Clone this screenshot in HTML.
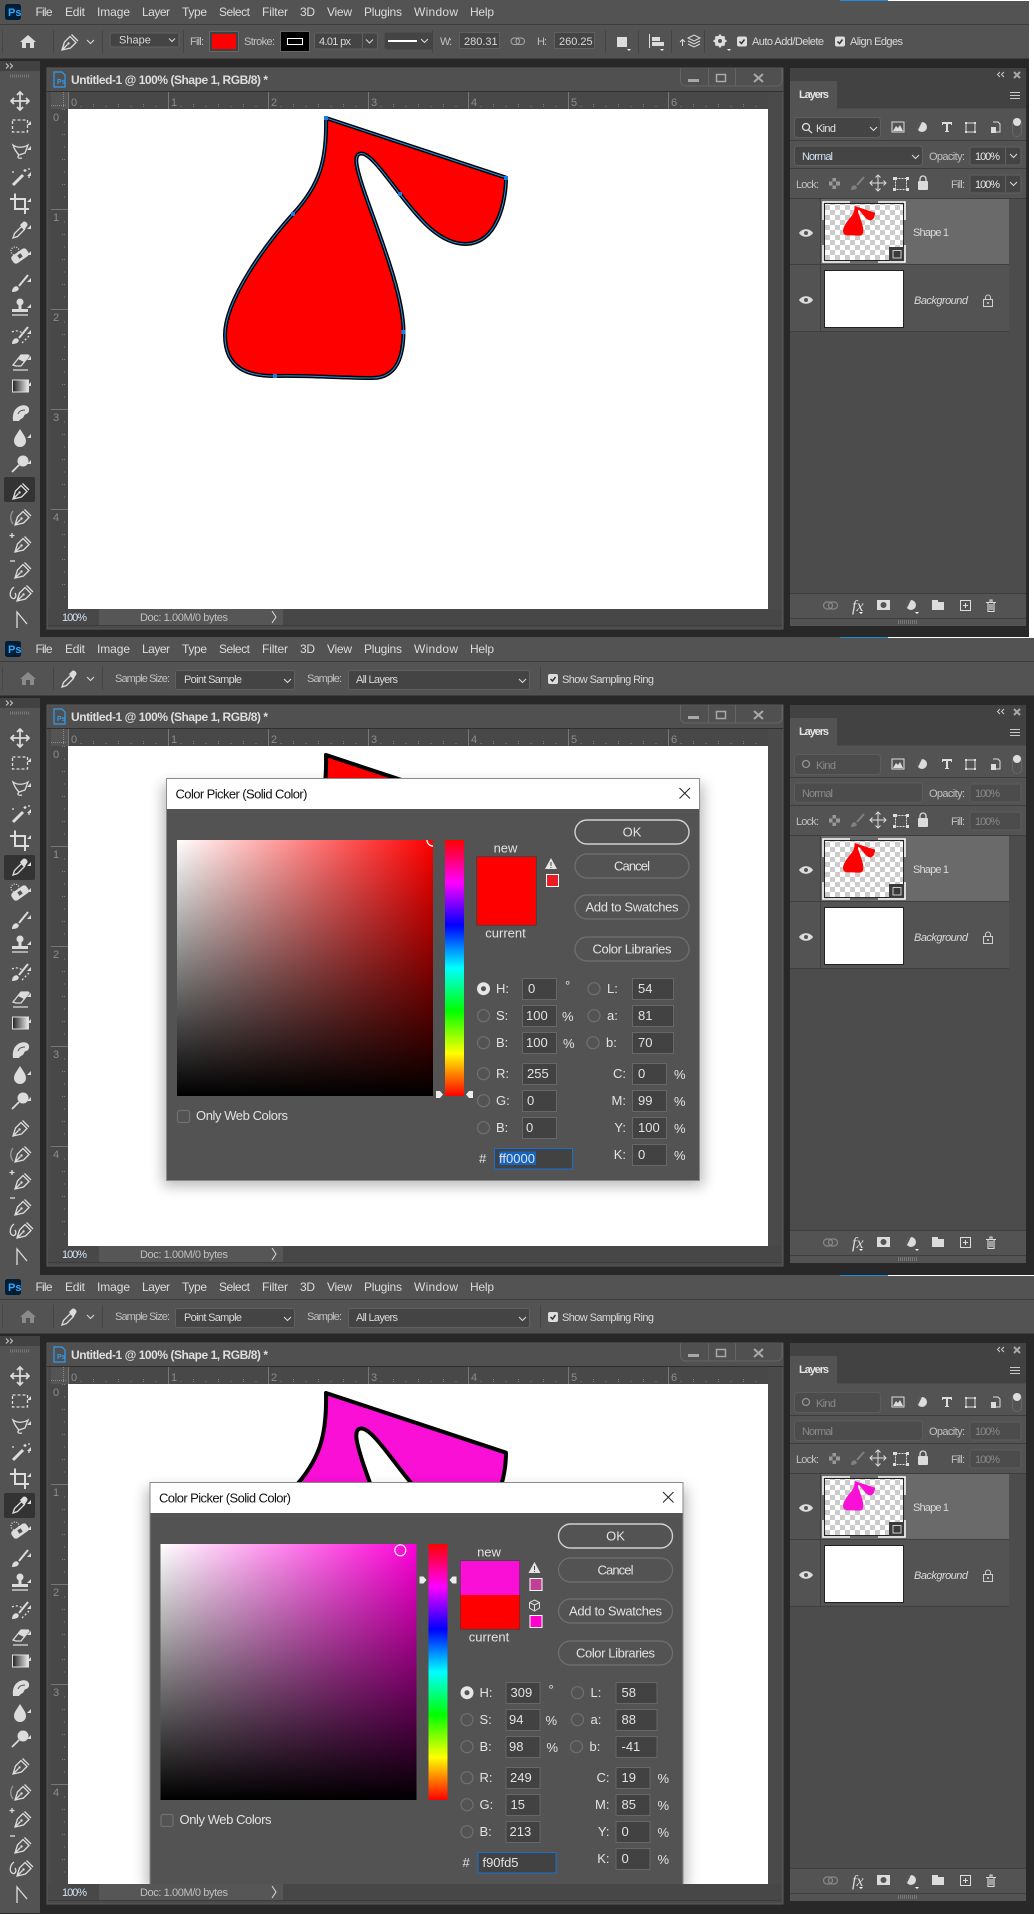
<!DOCTYPE html>
<html lang="en"><head><meta charset="utf-8"><title>Color Picker</title>
<style>
html,body{margin:0;padding:0;background:#fff;width:1034px;height:1914px;overflow:hidden}
svg{display:block}
text{font-family:"Liberation Sans",sans-serif;font-size:12px;fill:#dcdcdc}
.o{font-size:11px;fill:#d8d8d8}
.lb{font-size:11px;fill:#c0c0c0}
.r{font-size:11px;fill:#8c8c8c}
.ti{font-size:12px;font-weight:bold;fill:#dedede}
.d{font-size:13px;fill:#e2e2e2}
.dm{font-size:11px;fill:#8a8a8a}
.i{fill:none}
.i:not([stroke]){stroke:#dcdcdc}
.i:not([stroke-width]){stroke-width:1.3}
.f{fill:#dcdcdc;stroke:none}
</style></head><body>
<svg width="1034" height="1914" viewBox="0 0 1034 1914" xmlns="http://www.w3.org/2000/svg">
<defs>
<linearGradient id="gw"><stop offset="0" stop-color="#fff"/><stop offset="1" stop-color="#fff" stop-opacity="0"/></linearGradient>
<linearGradient id="gb" x2="0" y2="1"><stop offset="0" stop-color="#000" stop-opacity="0"/><stop offset="1" stop-color="#000"/></linearGradient>
<linearGradient id="gh" x2="0" y2="1"><stop offset="0" stop-color="#f00"/><stop offset=".167" stop-color="#f0f"/><stop offset=".333" stop-color="#00f"/><stop offset=".5" stop-color="#0ff"/><stop offset=".667" stop-color="#0f0"/><stop offset=".833" stop-color="#ff0"/><stop offset="1" stop-color="#f00"/></linearGradient>
<linearGradient id="gg"><stop offset="0" stop-color="#222"/><stop offset="1" stop-color="#eee"/></linearGradient>
<filter id="sh" x="-10%" y="-10%" width="120%" height="120%"><feGaussianBlur stdDeviation="7"/></filter>
<pattern id="ck" width="10" height="10" patternUnits="userSpaceOnUse"><rect width="10" height="10" fill="#fff"/><rect width="5" height="5" fill="#ccc"/><rect x="5" y="5" width="5" height="5" fill="#ccc"/></pattern>
<clipPath id="d3"><rect x="-30" y="-30" width="600" height="432"/></clipPath>
<path id="shape" d="M326 118L506 177.7C506 200 498 243 466 244C440 244 420 220 400 194C385 175 370 153 361 153.5C352 154 358 172 362 185C375 225 403 290 403.5 331C403.5 360 395 378 372 378C340 378 305 375 275 376C250 376 225 370 225 335C225 300 265 245 293 214C320 185 327 160 326 118Z"/>

<g id="pen"><path class="i" d="M-8 8L-5.500 0L0-5.500L6 .5L.5 6ZM-8 8L-2.500 2.500M1.500-7.500L8-1"/><circle class="f" cx="-1.500" cy="1.500" r="1.200"/></g>
<g id="drop"><path class="i" d="M-7 8L-5.500 3.500L1.500-3.500L4.500-.5L-2.500 6.500Z"/><path class="f" d="M0-5L3-8C5-10 9-6 7-4L4.500 0L3-1Z"/></g>

<g id="tools">
<path class="i" stroke-width="1.700" d="M20 92V110M11 101H29M17 95L20 92 23 95M17 107L20 110 23 107M14 98L11 101 14 104M26 98L29 101 26 104"/>
<rect x="12.500" y="120" width="15" height="12" class="i" stroke-dasharray="3 2"/>
<path class="i" d="M13 145C17 148 23 148 28 145L25 153 19 155C16 152 14 148 13 145ZM19 155C17 157 18 159 22 158"/>
<path class="i" stroke-width="3" d="M13 185L23 175"/><path class="i" d="M25 169V172M23.500 170.500H26.500M29 175V178M13 171V173M28 169H30"/>
<path class="i" stroke-width="2" d="M15 193.500V209H29M10 199H25V214"/>
<use href="#drop" x="20" y="230"/>
<g transform="translate(20 256) rotate(-35)"><rect x="-9" y="-4.500" width="18" height="9" rx="3" class="f"/><rect x="-2" y="-2" width="4" height="4" fill="#555"/></g><circle cx="15" cy="251" r="4" class="i" stroke-dasharray="1 1.500"/>
<path class="f" d="M12 292C12 287 16 285 18 287C20 289 18 292 12 292Z"/><path class="i" stroke-width="2" d="M19 286L28 275"/>
<circle cx="20" cy="302" r="3.500" class="f"/><rect x="18.500" y="304" width="3" height="5" class="f"/><rect x="12" y="309" width="16" height="3" class="f"/><path class="i" d="M12 315H28"/>
<path class="f" d="M12 344C12 339 16 337 18 339C20 341 18 344 12 344Z"/><path class="i" stroke-width="2" d="M19 338L28 327"/><path class="i" stroke-dasharray="2 2" d="M12 332C16 330 20 331 22 333M22 343L29 336"/>
<path class="i" d="M13 365L21 355H28L29 356L21 366H16ZM13 370H28"/><path class="f" d="M21 355H28L29 356L24 362L18 359Z"/>
<rect x="12.500" y="380" width="16" height="12" fill="url(#gg)" stroke="#ddd"/>
<path class="f" d="M13 421C12 413 15 408 20 406C25 404 30 406 29 411C28 415 25 413 24 416C23 419 21 418 19 421Z"/><path stroke="#535353" fill="none" d="M18 414C19 411 22 410 25 410"/>
<path class="f" d="M20 429C23 434 26 437 26 441A6 6 0 0 1 14 441C14 437 17 434 20 429Z"/>
<circle cx="23" cy="461" r="5.500" class="f"/><path class="i" stroke-width="1.800" d="M19 465L12 472"/>
<path fill="#dcdcdc" d="M31 121L31 125 27 125ZM31 146L31 150 27 150ZM31 172L31 176 27 176ZM31 198L31 202 27 202ZM31 225L31 229 27 229ZM31 251L31 255 27 255ZM31 278L31 282 27 282ZM31 304L31 308 27 308ZM31 330L31 334 27 334ZM31 356L31 360 27 360ZM31 382L31 386 27 386ZM31 434L31 438 27 438ZM31 460L31 464 27 464Z"/>
<use href="#pen" x="21" y="491"/>
<use href="#pen" x="23" y="517"/><path class="i" stroke="#999" d="M13 511C10 515 10 520 13 524"/>
<use href="#pen" x="23" y="544"/><path class="i" d="M12 533V538M9.500 535.500H14.500"/>
<use href="#pen" x="23" y="570"/><path class="i" d="M10 561H15"/>
<use href="#pen" x="25" y="593"/><path class="i" d="M14 587C10 590 9 596 12 598C15 600 17 596 15 593"/>
<path class="i" d="M17 628V612L27 624"/>
</g>

<g id="chrome">
<rect width="1034" height="638" fill="#282828"/>
<rect width="1034" height="24" fill="#535353"/><rect y="24" width="1034" height="1" fill="#3c3c3c"/>
<rect y="25" width="1034" height="33" fill="#535353"/><rect y="58" width="1034" height="1" fill="#3e3e3e"/>
<rect x="840" width="48" height="1" fill="#1d8fd8"/><rect x="888" width="146" height="1" fill="#fff"/>
<rect x="5" y="4" width="16" height="16" rx="2.500" fill="#001e36"/>
<path stroke="#3a3a3a" d="M2.500 30V53" stroke-dasharray="1 1"/>
<path stroke="#444" d="M53.500 30V53M102.500 30V53"/>
<rect y="61" width="40" height="10" fill="#424242"/>
<path class="i" stroke="#ccc" stroke-width="1" d="M6 63.500L8.500 66 6 68.500M10 63.500L12.500 66 10 68.500"/>
<rect y="71" x="0" width="40" height="567" fill="#535353"/>
<path stroke="#777" stroke-dasharray="1 1" stroke-width="3" d="M10 76H29"/>

<rect x="47" y="68" width="736" height="561" fill="#4a4a4a" stroke="#5b5b5b"/>
<rect x="48" y="69" width="734" height="23" fill="#505050"/>
<path fill="none" stroke="#646464" d="M680.500 68.500V81a5 5 0 0 0 5 5H777a5 5 0 0 0 5-5V68.500M708.500 68V86M735.500 68V86"/>
<rect x="688" y="79" width="11" height="3" fill="#a8a8a8"/>
<rect x="716.500" y="74.500" width="9" height="7" fill="none" stroke="#a8a8a8" stroke-width="1.500"/>
<path d="M754 74L763 82M763 74L754 82" stroke="#a8a8a8" stroke-width="2"/>
<path d="M54 72H62L65 75V87H54Z" fill="none" stroke="#2f9cf0" stroke-width="1.200"/>
<rect x="51" y="92" width="717" height="17" fill="#484848"/><rect x="51" y="109" width="17" height="500" fill="#484848"/>
<rect x="51" y="92" width="17" height="17" fill="#545454"/>
<path stroke="#888" stroke-dasharray="1 1" d="M51 105.500H67M63.500 92V108"/>
<path stroke="#303030" d="M47 91.500H783"/>
<path stroke="#808080" stroke-dasharray="1 11.500" d="M68 106.500H768M64.500 109V609" stroke-width="1"/>
<path stroke="#808080" stroke-dasharray="1 24" d="M68 104.500H768M62.500 109V609"/>
<path stroke="#777" d="M68.500 92V109M168.500 92V109M268.500 92V109M368.500 92V109M468.500 92V109M568.500 92V109M668.500 92V109M51 209.500H68M51 309.500H68M51 409.500H68M51 509.500H68"/>
<rect x="68" y="109" width="700" height="500" fill="#fff"/>
<rect x="48" y="609" width="734" height="16" fill="#474747"/>
<rect x="48" y="609" width="51" height="16" fill="#484848"/><rect x="99" y="609" width="184" height="16" fill="#565656"/>
<path class="i" stroke-width="1" d="M272 611L276 617 272 623"/>
<path stroke="#3d3d3d" d="M48 625.500H782"/>

<rect x="790" y="68" width="236" height="558" fill="#4c4c4c"/>
<rect x="790" y="68" width="236" height="40" fill="#424242"/>
<rect x="790" y="81" width="47" height="28" fill="#535353"/>
<rect x="790" y="109" width="236" height="90" fill="#535353"/>
<path class="i" stroke="#ccc" stroke-width="1" d="M1000 72L997.500 74.500 1000 77M1004 72L1001.500 74.500 1004 77"/>
<path d="M1014 72L1020 78M1020 72L1014 78" stroke="#aaa" stroke-width="2"/>
<path stroke="#c8c8c8" d="M1010 92.500H1020M1010 95.500H1020M1010 98.500H1020"/>
<path stroke="#3e3e3e" d="M790 140.500H1026M790 168.500H1026M790 198.500H1026"/>
<rect x="820" y="199" width="189" height="65" fill="#6a6a6a"/>
<rect x="790" y="199" width="30" height="65" fill="#535353"/>
<rect x="790" y="265" width="219" height="66" fill="#535353"/>
<path stroke="#3f3f3f" d="M790 264.500H1009M820.500 199V331M790 331.500H1009"/>
<path class="f" d="M799 233C802 228 810 228 813 233C810 238 802 238 799 233Z"/><circle cx="806" cy="233" r="2" fill="#555"/>
<path class="f" d="M799 300C802 295 810 295 813 300C810 305 802 305 799 300Z"/><circle cx="806" cy="300" r="2" fill="#555"/>
<rect x="824.500" y="203.500" width="79" height="57" fill="url(#ck)" stroke="#222"/>
<path fill="none" stroke="#fff" stroke-width="1.500" d="M823 220V202H850M878 202H905V220M905 245V262H878M850 262H823V245"/>
<rect x="889" y="247" width="15" height="14" fill="#3a3a3a"/>
<rect x="893" y="250.500" width="8" height="7.500" fill="none" stroke="#ccc"/>
<rect x="824.500" y="270.500" width="79" height="57" fill="#fff" stroke="#222"/>
<path fill="none" stroke="#d0d0d0" d="M983.500 299.500H992.500V306.500H983.500ZM985.500 299.500V297.500A2.500 2.500 0 0 1 990.500 297.500V299.500"/><circle cx="988" cy="303" r="1" fill="#d0d0d0"/>
<rect x="790" y="593" width="236" height="25" fill="#535353"/>
<path stroke="#3e3e3e" d="M790 593.500H1026M790 618.500H1026"/>
<rect x="790" y="619" width="236" height="7" fill="#535353"/>
<path stroke="#777" stroke-dasharray="1 1" stroke-width="4" d="M898 622H918"/>
<rect x="823.500" y="602" width="9" height="7" rx="3.500" fill="none" stroke="#888" stroke-width="1.200"/><rect x="828.500" y="602" width="9" height="7" rx="3.500" fill="none" stroke="#888" stroke-width="1.200"/>
<rect x="877" y="600" width="13" height="10" class="f"/><circle cx="883.500" cy="605" r="3" fill="#555"/>
<circle cx="911" cy="605" r="5" class="f"/><path fill="#555" d="M911 600a5 5 0 0 0-4 8Z"/>
<path fill="#fff" d="M859 612h4l-2 2zM915 612h4l-2 2z"/>
<path class="f" d="M932 600H938V602H944V610H932Z"/>
<rect x="960.500" y="600.500" width="10" height="10" class="i" stroke-width="1"/><path class="i" stroke-width="1" d="M965.500 603V608M963 605.500H968"/>
<path class="i" stroke-width="1.100" d="M986 602.500H996M988 602V611.500H994V602M990 602V600H992V602M990 604V610M992 604V610"/>
</g>

<g id="layericons">
<rect x="892" y="122" width="12" height="10" class="i" stroke-width="1"/><path class="f" d="M893 131L896 126 898 128 900 125 903 131Z"/>
<circle cx="922" cy="127" r="5" class="f"/><path fill="#555" d="M922 122a5 5 0 0 0-4 8Z"/>
<path class="f" d="M942 122H952V125H951V124H948V131H949V132H945V131H946V124H943V125H942Z"/>
<rect x="966" y="123" width="9" height="9" class="i" stroke-width="1"/><path fill="#dcdcdc" d="M965 122h2v2h-2zM974 122h2v2h-2zM965 131h2v2h-2zM974 131h2v2h-2z"/>
<path class="i" stroke-width="1" d="M993 122H998L1000 124V132H995"/><rect x="991" y="127" width="5" height="6" class="f"/>
<rect x="1012.500" y="118.500" width="9" height="18" rx="4.500" fill="none" stroke="#666"/><circle cx="1017" cy="122" r="4" fill="#ddd"/>
</g>

<g id="locks">
<rect x="829" y="178" width="11" height="11" fill="#999"/><path fill="#555" d="M829 178h3.500v3.500h-3.500zM836 178h4v3.500h-4zM832.500 181.500h3.500v4h-3.500zM829 185.500h3.500v3.500h-3.500zM836 185.500h4v3.500h-4z"/>
<path fill="#808080" d="M851 190C851 186 854 184 856 186C858 188 856 190 851 190Z"/><path stroke="#808080" stroke-width="2" d="M857 185L864 177"/>
<path class="i" stroke-width="1" d="M878 175V191M870 183H886M875.500 177.500L878 175 880.500 177.500M875.500 188.500L878 191 880.500 188.500M872.500 180.500L870 183 872.500 185.500M883.500 180.500L886 183 883.500 185.500"/>
<path class="i" stroke-dasharray="2 1" stroke-width="1" d="M895.500 178.500H906.500V189.500H895.500Z"/><path fill="#ddd" d="M893 177h4v3h-4zM906 177h3v3h-3zM893 188h3v3h-3zM906 188h3v3h-3z"/>
<rect x="918" y="181" width="10" height="9" rx="1" class="f"/><path class="i" d="M920 181V179A3 3 0 0 1 926 179V181"/>
</g>

<g id="dlgbase">
<rect x="-3" y="6" width="540" height="402" fill="#000" opacity=".28" filter="url(#sh)"/>
<rect x=".5" y=".5" width="533" height="402" fill="#535353" stroke="#8b8b8b"/>
<rect x="1" y="1" width="532" height="30" fill="#fff"/>
<path d="M513.500 10L524 20.500M524 10L513.500 20.500" stroke="#222" stroke-width="1"/>
<rect x="279" y="62" width="19" height="256" fill="url(#gh)"/>
<rect x="310.500" y="78.500" width="60" height="69" fill="#333"/>
<path fill="#e4e4e4" d="M385 80L391 91H379Z"/><path d="M385 84V88M385 89V90" stroke="#444"/>
<g fill="none" stroke="#707070" stroke-width="1.200">
<rect x="409" y="76" width="114" height="24" rx="12"/><rect x="409" y="117" width="114" height="24" rx="12"/><rect x="409" y="159" width="114" height="24" rx="12"/>
<circle cx="317.500" cy="237.700" r="6"/><circle cx="317.500" cy="264.700" r="6"/><circle cx="317.500" cy="295.700" r="6"/><circle cx="317.500" cy="322.700" r="6"/><circle cx="317.500" cy="349.700" r="6"/>
<circle cx="428" cy="210.700" r="6"/><circle cx="428" cy="237.700" r="6"/><circle cx="427" cy="264.700" r="6"/>
<rect x="11.500" y="332.500" width="12" height="12" rx="2"/>
</g>
<rect x="409" y="42" width="114" height="24" rx="12" fill="none" stroke="#cfcfcf" stroke-width="1.400"/>
<circle cx="317.500" cy="210.700" r="6.500" fill="#e6e6e6"/><circle cx="317.500" cy="210.700" r="2.500" fill="#535353"/>
<g fill="#424242" stroke="#676767">
<rect x="356.500" y="200.500" width="34" height="21"/><rect x="356.500" y="227.500" width="34" height="21"/><rect x="356.500" y="254.500" width="34" height="21"/>
<rect x="356.500" y="285.500" width="34" height="21"/><rect x="356.500" y="312.500" width="34" height="21"/><rect x="356.500" y="339.500" width="34" height="21"/>
<rect x="466.500" y="200.500" width="41" height="21"/><rect x="466.500" y="227.500" width="41" height="21"/><rect x="466.500" y="254.500" width="41" height="21"/>
<rect x="466.500" y="285.500" width="34" height="21"/><rect x="466.500" y="312.500" width="34" height="21"/><rect x="466.500" y="339.500" width="34" height="21"/><rect x="466.500" y="366.500" width="34" height="21"/>
</g>
<rect x="328.500" y="370.500" width="78" height="20.500" fill="#424242" stroke="#1a6fd0"/>
</g>
</defs>

<rect y="1900" width="1034" height="14" fill="#282828"/>

<!-- PANEL 1 -->
<g>
<use href="#chrome"/>
<rect x="1029" width="5" height="638" fill="#fff"/>
<rect x="4" y="477" width="31" height="25" rx="2" fill="#333"/>
<use href="#tools"/>
<text x="8" y="16" style="font-size:11px;font-weight:bold;fill:#31a8ff">Ps</text>
<text x="35.500" y="16" textLength="17">File</text><text x="65" y="16" textLength="20">Edit</text><text x="97" y="16" textLength="33">Image</text><text x="142" y="16" textLength="28">Layer</text><text x="182" y="16" textLength="25">Type</text><text x="219" y="16" textLength="31">Select</text><text x="262" y="16" textLength="26">Filter</text><text x="300" y="16" textLength="15">3D</text><text x="327" y="16" textLength="25">View</text><text x="364" y="16" textLength="38">Plugins</text><text x="414" y="16" textLength="44">Window</text><text x="470" y="16" textLength="24">Help</text>

<path class="f" d="M28 35L20 42H22V48H26V43H30V48H34V42H36Z"/>
<use href="#pen" x="70" y="42"/><path class="i" stroke-width="1" d="M87 40L90.500 43.500 94 40"/>
<rect x="110" y="33" width="69" height="14" rx="2" fill="#444" stroke="#606060"/>
<text class="o" x="119" y="43.500">Shape</text><path class="i" stroke-width="1" d="M169 38.500L172 41.500 175 38.500"/>
<path stroke="#444" d="M183.500 30V53M605.500 30V53M638.500 30V53M671.500 30V53M704.500 30V53M432.500 30V53" />
<text class="lb" x="190" y="45" textLength="14">Fill:</text>
<rect x="209.500" y="31.500" width="29" height="20" fill="#404040" stroke="#666"/><rect x="212" y="34" width="24" height="15" fill="#f00"/>
<text class="lb" x="244" y="45" textLength="31">Stroke:</text>
<rect x="280.500" y="31.500" width="29" height="20" fill="#000" stroke="#666"/><rect x="287.500" y="38.500" width="15" height="6" fill="none" stroke="#fff"/>
<rect x="314.500" y="33" width="63" height="16" rx="2" fill="#444" stroke="#606060"/><path stroke="#606060" d="M362.500 33V49"/>
<text class="o" x="319" y="45" textLength="32">4.01 px</text><path class="i" stroke-width="1" d="M366 39.500L369.500 43 373 39.500"/>
<rect x="384.500" y="32.500" width="48" height="17" rx="2" fill="#444"/><rect x="388" y="40" width="29" height="2" fill="#fff"/><path class="i" stroke-width="1" d="M421 39L424.500 42.500 428 39"/>
<text class="lb" x="440" y="45" textLength="12">W:</text>
<rect x="459.500" y="32.500" width="40" height="16" fill="#444" stroke="#606060"/><svg x="460" y="33" width="39" height="16"><text class="o" x="4" y="12">280.31 px</text></svg>
<rect x="511" y="38" width="8.500" height="6.500" rx="3.200" fill="none" stroke="#aaa"/><rect x="516" y="38" width="8.500" height="6.500" rx="3.200" fill="none" stroke="#aaa"/>
<text class="lb" x="537" y="45" textLength="10">H:</text>
<rect x="554.500" y="32.500" width="40" height="16" fill="#444" stroke="#606060"/><svg x="555" y="33" width="39" height="16"><text class="o" x="4" y="12">260.25 px</text></svg>
<rect x="617" y="37" width="10" height="10" fill="#ddd"/><path fill="#fff" d="M627 49h4l-2 2z"/>
<path class="f" d="M649 34h1v14h-1zM652 37h8v4h-8zM652 42h12v4h-12z"/><path fill="#fff" d="M660 49h4l-2 2z"/>
<path class="i" stroke-width="1" d="M688 38L694 35 700 38 694 41ZM688 41L694 44 700 41M688 44L694 47 700 44M680 42L682.500 39.500 685 42M682.500 39.500V46"/>
<circle cx="720" cy="41" r="4" fill="none" stroke="#ddd" stroke-width="3"/><path stroke="#ddd" stroke-width="2" d="M720 34.500V47.500M713.500 41H726.500M715.500 36.500L724.500 45.500M724.500 36.500L715.500 45.500"/><circle cx="720" cy="41" r="2" fill="#535353"/><path fill="#fff" d="M727 49h4l-2 2z"/>
<rect x="737" y="36.500" width="10" height="10" rx="2" fill="#ddd"/><path fill="none" stroke="#333" stroke-width="1.500" d="M739.500 41.500L741.500 43.500 744.500 39.500"/>
<text class="o" x="752" y="45" textLength="72">Auto Add/Delete</text>
<rect x="835" y="36.500" width="10" height="10" rx="2" fill="#ddd"/><path fill="none" stroke="#333" stroke-width="1.500" d="M837.500 41.500L839.500 43.500 842.500 39.500"/>
<text class="o" x="850" y="45" textLength="53">Align Edges</text>

<text class="ti" x="71" y="84" textLength="197">Untitled-1 @ 100% (Shape 1, RGB/8) *</text>
<text x="57" y="84" style="font-size:7px;font-weight:bold;fill:#2f9cf0">Ps</text>
<text class="r" x="71" y="106">0</text><text class="r" x="171" y="106">1</text><text class="r" x="271" y="106">2</text><text class="r" x="371" y="106">3</text><text class="r" x="471" y="106">4</text><text class="r" x="571" y="106">5</text><text class="r" x="671" y="106">6</text>
<text class="r" x="53" y="121">0</text><text class="r" x="53" y="221">1</text><text class="r" x="53" y="321">2</text><text class="r" x="53" y="421">3</text><text class="r" x="53" y="521">4</text>
<text class="o" x="62" y="621" textLength="25" style="fill:#cfe3f5">100%</text><text class="o" x="140" y="621" textLength="88" style="fill:#bfbfbf">Doc: 1.00M/0 bytes</text>

<use href="#shape" fill="#f00" stroke="#000" stroke-width="4" stroke-linejoin="round"/>
<use href="#shape" fill="none" stroke="#2a86d8" stroke-width="1.100"/>
<path fill="#1a7fe0" d="M324 116h4v4h-4zM504 176h4v4h-4zM398 192h4v4h-4zM291 212h4v4h-4zM401.500 330h4v4h-4zM273 374h4v4h-4z"/>

<text x="799" y="98" style="font-weight:bold;font-size:11px;fill:#e4e4e4" textLength="30">Layers</text>
<rect x="794.500" y="117.500" width="86" height="20" rx="3" fill="#444" stroke="#606060"/>
<circle cx="806" cy="127" r="3.500" class="i"/><path class="i" d="M808.500 130L812 133"/><text class="o" x="816" y="132" style="fill:#e0e0e0" textLength="20">Kind</text><path class="i" stroke-width="1" d="M870 127L873.500 130.500 877 127"/>
<use href="#layericons"/>
<rect x="794.500" y="146" width="128" height="19.500" rx="3" fill="#444" stroke="#606060"/><text class="o" x="802" y="160" style="fill:#cfe3f5" textLength="31">Normal</text><path class="i" stroke-width="1" d="M912 155L915.500 158.500 919 155"/>
<text class="lb" x="929" y="160" textLength="36">Opacity:</text>
<rect x="970" y="147" width="51" height="18" rx="2" fill="#444" stroke="#606060"/><path stroke="#606060" d="M1005.500 147V165"/><text class="o" x="975" y="160" textLength="25" style="fill:#e6e6e6">100%</text><path class="i" stroke-width="1" d="M1010 154L1013.500 157.500 1017 154"/>
<text class="lb" x="796" y="188" textLength="23">Lock:</text>
<use href="#locks"/>
<text class="lb" x="951" y="188" textLength="14">Fill:</text>
<rect x="970" y="175" width="51" height="18" rx="2" fill="#444" stroke="#606060"/><path stroke="#606060" d="M1005.500 175V193"/><text class="o" x="975" y="188" textLength="25" style="fill:#e6e6e6">100%</text><path class="i" stroke-width="1" d="M1010 182L1013.500 185.500 1017 182"/>
<g transform="translate(843 206) scale(.114) translate(-225 -118)"><use href="#shape" fill="#f00"/></g>
<text class="o" x="913" y="236" textLength="36">Shape 1</text>
<text class="o" x="914" y="304" textLength="54" style="font-style:italic">Background</text>
<text x="852" y="611" style="font-style:italic;font-family:'Liberation Serif',serif;font-size:16px">fx</text>
</g>

<!-- PANEL 2 -->
<g transform="translate(0 637)">
<use href="#chrome"/>
<rect x="4" y="218" width="31" height="25" rx="2" fill="#333"/>
<use href="#tools"/>
<text x="8" y="16" style="font-size:11px;font-weight:bold;fill:#31a8ff">Ps</text>
<text x="35.500" y="16" textLength="17">File</text><text x="65" y="16" textLength="20">Edit</text><text x="97" y="16" textLength="33">Image</text><text x="142" y="16" textLength="28">Layer</text><text x="182" y="16" textLength="25">Type</text><text x="219" y="16" textLength="31">Select</text><text x="262" y="16" textLength="26">Filter</text><text x="300" y="16" textLength="15">3D</text><text x="327" y="16" textLength="25">View</text><text x="364" y="16" textLength="38">Plugins</text><text x="414" y="16" textLength="44">Window</text><text x="470" y="16" textLength="24">Help</text>

<path fill="#8a8a8a" d="M28 35L20 42H22V48H26V43H30V48H34V42H36Z"/>
<use href="#drop" x="69" y="42"/><path class="i" stroke-width="1" d="M87 40L90.500 43.500 94 40"/>
<text class="lb" x="115" y="45" textLength="55">Sample Size:</text>
<rect x="175.500" y="33.500" width="119" height="19" rx="2" fill="#444" stroke="#606060"/><text class="o" x="184" y="46" textLength="58">Point Sample</text><path class="i" stroke-width="1" d="M284 42L287.500 45.500 291 42"/>
<text class="lb" x="307" y="45" textLength="35">Sample:</text>
<rect x="348.500" y="33.500" width="181" height="19" rx="2" fill="#444" stroke="#606060"/><text class="o" x="356" y="46" textLength="42">All Layers</text><path class="i" stroke-width="1" d="M519 42L522.500 45.500 526 42"/>
<path stroke="#444" d="M540.500 30V53"/>
<rect x="548" y="37" width="10" height="10" rx="2" fill="#ddd"/><path fill="none" stroke="#333" stroke-width="1.500" d="M550.500 42L552.500 44 555.500 40"/>
<text class="o" x="562" y="46" textLength="92">Show Sampling Ring</text>

<text class="ti" x="71" y="84" textLength="197">Untitled-1 @ 100% (Shape 1, RGB/8) *</text>
<text x="57" y="84" style="font-size:7px;font-weight:bold;fill:#2f9cf0">Ps</text>
<text class="r" x="71" y="106">0</text><text class="r" x="171" y="106">1</text><text class="r" x="271" y="106">2</text><text class="r" x="371" y="106">3</text><text class="r" x="471" y="106">4</text><text class="r" x="571" y="106">5</text><text class="r" x="671" y="106">6</text>
<text class="r" x="53" y="121">0</text><text class="r" x="53" y="221">1</text><text class="r" x="53" y="321">2</text><text class="r" x="53" y="421">3</text><text class="r" x="53" y="521">4</text>
<text class="o" x="62" y="621" textLength="25" style="fill:#cfe3f5">100%</text><text class="o" x="140" y="621" textLength="88" style="fill:#bfbfbf">Doc: 1.00M/0 bytes</text>

<use href="#shape" fill="#f00" stroke="#000" stroke-width="4" stroke-linejoin="round"/>

<text x="799" y="98" style="font-weight:bold;font-size:11px;fill:#e4e4e4" textLength="30">Layers</text>
<rect x="794.500" y="117.500" width="86" height="20" rx="3" fill="#4c4c4c" stroke="#5c5c5c"/>
<circle cx="806" cy="127" r="3.500" class="i" opacity=".5"/><text class="dm" x="816" y="132" textLength="20">Kind</text>
<use href="#layericons"/>
<rect x="794.500" y="146" width="128" height="19.500" rx="3" fill="#4c4c4c" stroke="#5c5c5c"/><text class="dm" x="802" y="160" textLength="31">Normal</text>
<text class="lb" x="929" y="160" textLength="36">Opacity:</text>
<rect x="970" y="147" width="51" height="18" rx="2" fill="#4c4c4c" stroke="#5c5c5c"/><text class="dm" x="975" y="160" textLength="25">100%</text>
<text class="lb" x="796" y="188" textLength="23">Lock:</text>
<use href="#locks"/>
<text class="lb" x="951" y="188" textLength="14">Fill:</text>
<rect x="970" y="175" width="51" height="18" rx="2" fill="#4c4c4c" stroke="#5c5c5c"/><text class="dm" x="975" y="188" textLength="25">100%</text>
<g transform="translate(843 206) scale(.114) translate(-225 -118)"><use href="#shape" fill="#f00"/></g>
<text class="o" x="913" y="236" textLength="36">Shape 1</text>
<text class="o" x="914" y="304" textLength="54" style="font-style:italic">Background</text>
<text x="852" y="611" style="font-style:italic;font-family:'Liberation Serif',serif;font-size:16px">fx</text>

<g transform="translate(166 141)">
<use href="#dlgbase"/>
<rect x="11" y="62" width="256" height="256" fill="#f00"/>
<rect x="11" y="62" width="256" height="256" fill="url(#gw)"/>
<rect x="11" y="62" width="256" height="256" fill="url(#gb)"/>
<path d="M261 62A6 6 0 0 0 267 68" fill="none" stroke="#fff" stroke-width="1.300"/>
<path fill="#ececec" d="M270 313H274L277 316.500 274 320H270ZM307 313V320H303L300 316.500 303 313Z"/>
<rect x="311" y="79" width="59" height="68" fill="#f00"/>
<rect x="380.500" y="96.500" width="12" height="12" fill="#ed1c24" stroke="#fff"/>
<text x="9.500" y="20.500" class="d" style="fill:#111" textLength="132">Color Picker (Solid Color)</text>
<text class="d" x="466" y="58.500" text-anchor="middle">OK</text>
<text class="d" x="466" y="92.500" text-anchor="middle" textLength="36">Cancel</text>
<text class="d" x="466" y="133.500" text-anchor="middle" textLength="93">Add to Swatches</text>
<text class="d" x="466" y="175.500" text-anchor="middle" textLength="79">Color Libraries</text>
<text class="d" x="339.500" y="74.500" text-anchor="middle">new</text><text class="d" x="339.500" y="159.500" text-anchor="middle">current</text>
<text class="d" x="30" y="342" textLength="92">Only Web Colors</text>
<text class="d" x="330" y="215">H:</text><text class="d" x="330" y="242">S:</text><text class="d" x="330" y="269">B:</text><text class="d" x="330" y="300">R:</text><text class="d" x="330" y="327">G:</text><text class="d" x="330" y="354">B:</text>
<text class="d" x="362" y="215">0</text><text class="d" x="360" y="242">100</text><text class="d" x="360" y="269">100</text><text class="d" x="361" y="300">255</text><text class="d" x="361" y="327">0</text><text class="d" x="360" y="354">0</text>
<text class="d" x="399" y="212">°</text><text class="d" x="396" y="243">%</text><text class="d" x="397" y="270">%</text>
<text class="d" x="441" y="215">L:</text><text class="d" x="441" y="242">a:</text><text class="d" x="440" y="269">b:</text>
<text class="d" x="472" y="215">54</text><text class="d" x="472" y="242">81</text><text class="d" x="472" y="269">70</text>
<text class="d" x="460" y="300" text-anchor="end">C:</text><text class="d" x="460" y="327" text-anchor="end">M:</text><text class="d" x="460" y="354" text-anchor="end">Y:</text><text class="d" x="460" y="381" text-anchor="end">K:</text>
<text class="d" x="472" y="300">0</text><text class="d" x="472" y="327">99</text><text class="d" x="472" y="354">100</text><text class="d" x="472" y="381">0</text>
<text class="d" x="508" y="301">%</text><text class="d" x="508" y="328">%</text><text class="d" x="508" y="355">%</text><text class="d" x="508" y="382">%</text>
<text class="d" x="313" y="385">#</text>
<rect x="333" y="373.500" width="37" height="13.500" fill="#1565c0"/>
<text class="d" x="333" y="385" textLength="36">ff0000</text>
</g>
</g>

<!-- PANEL 3 -->
<g transform="translate(0 1275)">
<use href="#chrome"/>
<rect x="4" y="218" width="31" height="25" rx="2" fill="#333"/>
<use href="#tools"/>
<text x="8" y="16" style="font-size:11px;font-weight:bold;fill:#31a8ff">Ps</text>
<text x="35.500" y="16" textLength="17">File</text><text x="65" y="16" textLength="20">Edit</text><text x="97" y="16" textLength="33">Image</text><text x="142" y="16" textLength="28">Layer</text><text x="182" y="16" textLength="25">Type</text><text x="219" y="16" textLength="31">Select</text><text x="262" y="16" textLength="26">Filter</text><text x="300" y="16" textLength="15">3D</text><text x="327" y="16" textLength="25">View</text><text x="364" y="16" textLength="38">Plugins</text><text x="414" y="16" textLength="44">Window</text><text x="470" y="16" textLength="24">Help</text>

<path fill="#8a8a8a" d="M28 35L20 42H22V48H26V43H30V48H34V42H36Z"/>
<use href="#drop" x="69" y="42"/><path class="i" stroke-width="1" d="M87 40L90.500 43.500 94 40"/>
<text class="lb" x="115" y="45" textLength="55">Sample Size:</text>
<rect x="175.500" y="33.500" width="119" height="19" rx="2" fill="#444" stroke="#606060"/><text class="o" x="184" y="46" textLength="58">Point Sample</text><path class="i" stroke-width="1" d="M284 42L287.500 45.500 291 42"/>
<text class="lb" x="307" y="45" textLength="35">Sample:</text>
<rect x="348.500" y="33.500" width="181" height="19" rx="2" fill="#444" stroke="#606060"/><text class="o" x="356" y="46" textLength="42">All Layers</text><path class="i" stroke-width="1" d="M519 42L522.500 45.500 526 42"/>
<path stroke="#444" d="M540.500 30V53"/>
<rect x="548" y="37" width="10" height="10" rx="2" fill="#ddd"/><path fill="none" stroke="#333" stroke-width="1.500" d="M550.500 42L552.500 44 555.500 40"/>
<text class="o" x="562" y="46" textLength="92">Show Sampling Ring</text>

<text class="ti" x="71" y="84" textLength="197">Untitled-1 @ 100% (Shape 1, RGB/8) *</text>
<text x="57" y="84" style="font-size:7px;font-weight:bold;fill:#2f9cf0">Ps</text>
<text class="r" x="71" y="106">0</text><text class="r" x="171" y="106">1</text><text class="r" x="271" y="106">2</text><text class="r" x="371" y="106">3</text><text class="r" x="471" y="106">4</text><text class="r" x="571" y="106">5</text><text class="r" x="671" y="106">6</text>
<text class="r" x="53" y="121">0</text><text class="r" x="53" y="221">1</text><text class="r" x="53" y="321">2</text><text class="r" x="53" y="421">3</text><text class="r" x="53" y="521">4</text>
<text class="o" x="62" y="621" textLength="25" style="fill:#cfe3f5">100%</text><text class="o" x="140" y="621" textLength="88" style="fill:#bfbfbf">Doc: 1.00M/0 bytes</text>

<use href="#shape" fill="#f90fd5" stroke="#000" stroke-width="4" stroke-linejoin="round"/>

<text x="799" y="98" style="font-weight:bold;font-size:11px;fill:#e4e4e4" textLength="30">Layers</text>
<rect x="794.500" y="117.500" width="86" height="20" rx="3" fill="#4c4c4c" stroke="#5c5c5c"/>
<circle cx="806" cy="127" r="3.500" class="i" opacity=".5"/><text class="dm" x="816" y="132" textLength="20">Kind</text>
<use href="#layericons"/>
<rect x="794.500" y="146" width="128" height="19.500" rx="3" fill="#4c4c4c" stroke="#5c5c5c"/><text class="dm" x="802" y="160" textLength="31">Normal</text>
<text class="lb" x="929" y="160" textLength="36">Opacity:</text>
<rect x="970" y="147" width="51" height="18" rx="2" fill="#4c4c4c" stroke="#5c5c5c"/><text class="dm" x="975" y="160" textLength="25">100%</text>
<text class="lb" x="796" y="188" textLength="23">Lock:</text>
<use href="#locks"/>
<text class="lb" x="951" y="188" textLength="14">Fill:</text>
<rect x="970" y="175" width="51" height="18" rx="2" fill="#4c4c4c" stroke="#5c5c5c"/><text class="dm" x="975" y="188" textLength="25">100%</text>
<g transform="translate(843 206) scale(.114) translate(-225 -118)"><use href="#shape" fill="#f90fd5"/></g>
<text class="o" x="913" y="236" textLength="36">Shape 1</text>
<text class="o" x="914" y="304" textLength="54" style="font-style:italic">Background</text>
<text x="852" y="611" style="font-style:italic;font-family:'Liberation Serif',serif;font-size:16px">fx</text>

<g transform="translate(149.500 207)" clip-path="url(#d3)">
<use href="#dlgbase"/>
<rect x="11" y="62" width="256" height="256" fill="#ff00d9"/>
<rect x="11" y="62" width="256" height="256" fill="url(#gw)"/>
<rect x="11" y="62" width="256" height="256" fill="url(#gb)"/>
<circle cx="250.800" cy="68.300" r="5.500" fill="none" stroke="#fff" stroke-width="1.100"/>
<path fill="#ececec" d="M270 94.500H274L277 98 274 101.500H270ZM307 94.500V101.500H303L300 98 303 94.500Z"/>
<rect x="311" y="79" width="59" height="34" fill="#f90fd5"/>
<rect x="311" y="113" width="59" height="34" fill="#f00"/>
<rect x="380.500" y="96.500" width="12" height="12" fill="#c33f96" stroke="#fff"/>
<path fill="none" stroke="#ddd" d="M385 118L390 120.500V126L385 129L380 126V120.500ZM380 120.500L385 123L390 120.500M385 123V129"/>
<rect x="380.500" y="133.500" width="12" height="12" fill="#f0c" stroke="#fff"/>
<text x="9.500" y="20.500" class="d" style="fill:#111" textLength="132">Color Picker (Solid Color)</text>
<text class="d" x="466" y="58.500" text-anchor="middle">OK</text>
<text class="d" x="466" y="92.500" text-anchor="middle" textLength="36">Cancel</text>
<text class="d" x="466" y="133.500" text-anchor="middle" textLength="93">Add to Swatches</text>
<text class="d" x="466" y="175.500" text-anchor="middle" textLength="79">Color Libraries</text>
<text class="d" x="339.500" y="74.500" text-anchor="middle">new</text><text class="d" x="339.500" y="159.500" text-anchor="middle">current</text>
<text class="d" x="30" y="342" textLength="92">Only Web Colors</text>
<text class="d" x="330" y="215">H:</text><text class="d" x="330" y="242">S:</text><text class="d" x="330" y="269">B:</text><text class="d" x="330" y="300">R:</text><text class="d" x="330" y="327">G:</text><text class="d" x="330" y="354">B:</text>
<text class="d" x="361" y="215">309</text><text class="d" x="359.500" y="242">94</text><text class="d" x="359.500" y="269">98</text><text class="d" x="360.500" y="300">249</text><text class="d" x="361" y="327">15</text><text class="d" x="360" y="354">213</text>
<text class="d" x="399" y="212">°</text><text class="d" x="396" y="243">%</text><text class="d" x="397" y="270">%</text>
<text class="d" x="441" y="215">L:</text><text class="d" x="441" y="242">a:</text><text class="d" x="440" y="269">b:</text>
<text class="d" x="472" y="215">58</text><text class="d" x="472" y="242">88</text><text class="d" x="472" y="269">-41</text>
<text class="d" x="460" y="300" text-anchor="end">C:</text><text class="d" x="460" y="327" text-anchor="end">M:</text><text class="d" x="460" y="354" text-anchor="end">Y:</text><text class="d" x="460" y="381" text-anchor="end">K:</text>
<text class="d" x="472" y="300">19</text><text class="d" x="472" y="327">85</text><text class="d" x="472" y="354">0</text><text class="d" x="472" y="381">0</text>
<text class="d" x="508" y="301">%</text><text class="d" x="508" y="328">%</text><text class="d" x="508" y="355">%</text><text class="d" x="508" y="382">%</text>
<text class="d" x="313" y="385">#</text>
<text class="d" x="333" y="385" textLength="36">f90fd5</text>
</g>
</g>
</svg>
</body></html>
